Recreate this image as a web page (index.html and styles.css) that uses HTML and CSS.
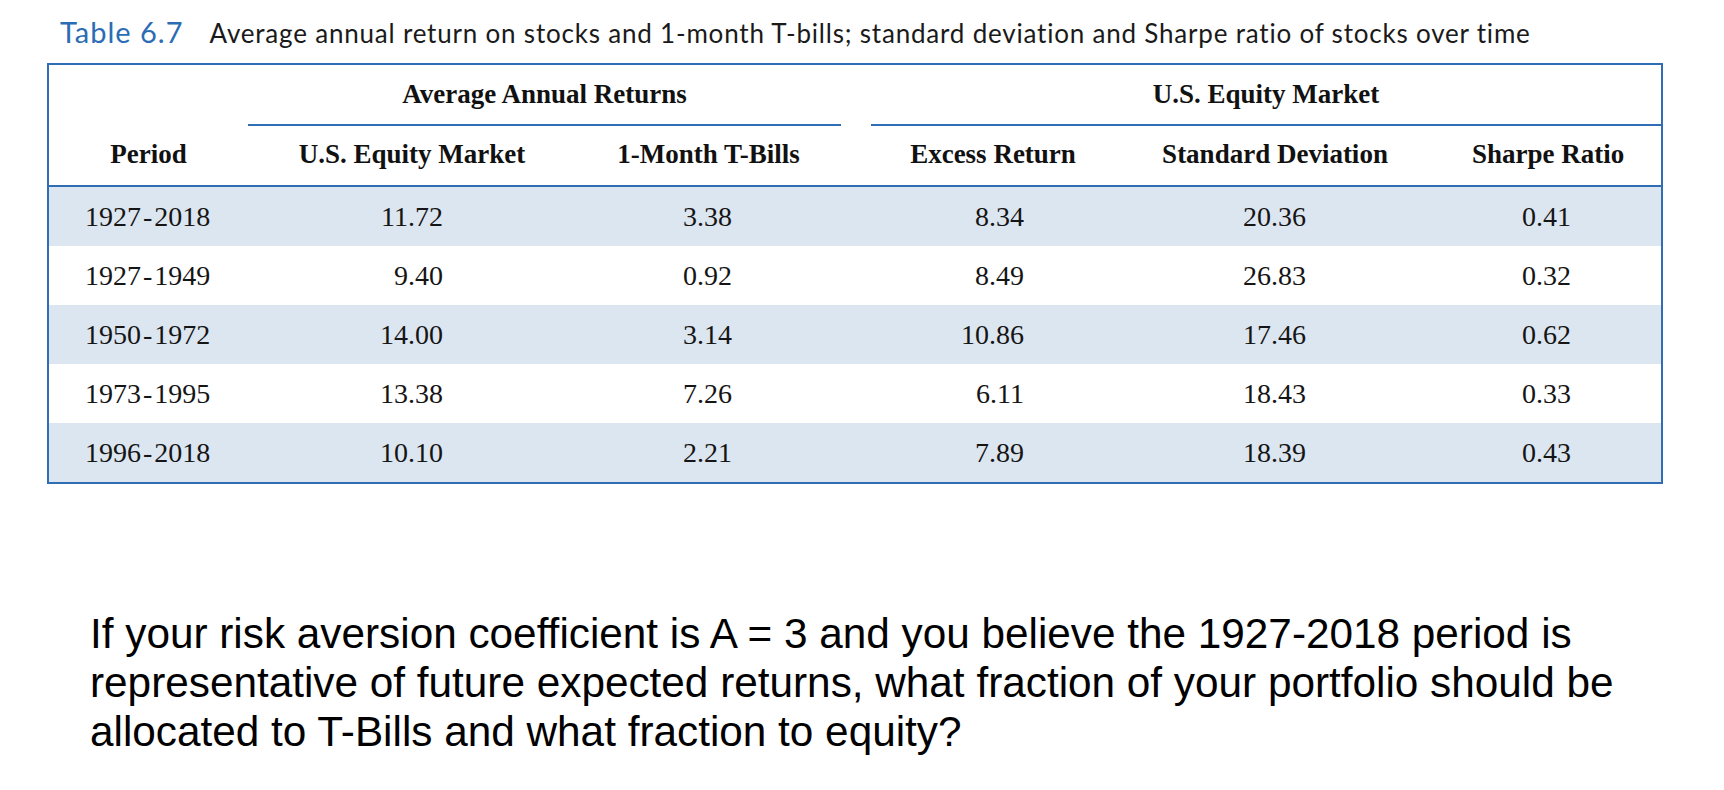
FILE: index.html
```html
<!DOCTYPE html>
<html lang="en">
<head>
<meta charset="utf-8">
<title>Table 6.7</title>
<link rel="stylesheet" href="styles.css">
</head>
<body>
<div class="page">
  <p class="caption"><span class="label">Table 6.7</span><span class="caption-text">Average annual return on stocks and 1-month T-bills; standard deviation and Sharpe ratio of stocks over time</span></p>
  <table class="returns">
    <colgroup>
      <col class="c-period">
      <col class="c-equity">
      <col class="c-tbills">
      <col class="c-gap">
      <col class="c-excess">
      <col class="c-sd">
      <col class="c-sharpe">
    </colgroup>
    <thead>
      <tr class="group-row">
        <th></th>
        <th colspan="2" class="group">Average Annual Returns</th>
        <th></th>
        <th colspan="3" class="group">U.S. Equity Market</th>
      </tr>
      <tr class="col-row">
        <th>Period</th>
        <th>U.S. Equity Market</th>
        <th>1-Month T-Bills</th>
        <th></th>
        <th>Excess Return</th>
        <th>Standard Deviation</th>
        <th>Sharpe Ratio</th>
      </tr>
    </thead>
    <tbody>
      <tr class="band">
        <td class="period">1927<span class="dash">-</span>2018</td>
        <td class="n2">11.72</td><td class="n3">3.38</td><td></td>
        <td class="n4">8.34</td><td class="n5">20.36</td><td class="n6">0.41</td>
      </tr>
      <tr>
        <td class="period">1927<span class="dash">-</span>1949</td>
        <td class="n2">9.40</td><td class="n3">0.92</td><td></td>
        <td class="n4">8.49</td><td class="n5">26.83</td><td class="n6">0.32</td>
      </tr>
      <tr class="band">
        <td class="period">1950<span class="dash">-</span>1972</td>
        <td class="n2">14.00</td><td class="n3">3.14</td><td></td>
        <td class="n4">10.86</td><td class="n5">17.46</td><td class="n6">0.62</td>
      </tr>
      <tr>
        <td class="period">1973<span class="dash">-</span>1995</td>
        <td class="n2">13.38</td><td class="n3">7.26</td><td></td>
        <td class="n4">6.11</td><td class="n5">18.43</td><td class="n6">0.33</td>
      </tr>
      <tr class="band">
        <td class="period">1996<span class="dash">-</span>2018</td>
        <td class="n2">10.10</td><td class="n3">2.21</td><td></td>
        <td class="n4">7.89</td><td class="n5">18.39</td><td class="n6">0.43</td>
      </tr>
    </tbody>
  </table>
  <p class="question">If your risk aversion coefficient is A = 3 and you believe the 1927-2018 period is representative of future expected returns, what fraction of your portfolio should be allocated to T-Bills and what fraction to equity?</p>
</div>
</body>
</html>
```

FILE: styles.css
```css
html, body {
  margin: 0;
  padding: 0;
  background: #ffffff;
}

.page {
  padding: 0 0 0 47px;
}

.caption {
  margin: 0;
  padding: 15px 0 0 13px;
  height: 48px;
  font-family: Lato, "Open Sans", sans-serif;
  font-size: 26px;
  letter-spacing: 0.8px;
  line-height: 34px;
  color: #1a1a1a;
  white-space: nowrap;
}

.caption .label {
  color: #2b6cb4;
  font-size: 29px;
  letter-spacing: 1px;
  margin-right: 26px;
}

.returns {
  border-collapse: separate;
  border-spacing: 0;
  border: 2px solid #2f6db5;
  width: 1616px;
  table-layout: fixed;
  font-family: "Liberation Serif", "Times New Roman", serif;
  color: #151515;
}

.c-period { width: 199px; }
.c-equity { width: 328px; }
.c-tbills { width: 265px; }
.c-gap { width: 30px; }
.c-excess { width: 244px; }
.c-sd { width: 320px; }
.c-sharpe { width: 226px; }

.returns th {
  font-weight: bold;
  font-size: 27px;
  text-align: center;
  padding: 0;
  color: #111111;
  vertical-align: middle;
}

.group-row {
  height: 61px;
}

.group-row th {
  border-bottom: 2px solid transparent;
}

.group-row th.group {
  border-bottom-color: #2f6db5;
}

.col-row {
  height: 61px;
}

.col-row th {
  border-bottom: 2px solid #2f6db5;
  padding-bottom: 3px;
}

.returns td {
  font-size: 28px;
  padding: 0;
  height: 59px;
  text-align: right;
  vertical-align: middle;
}

.returns tbody tr {
  height: 59px;
}

.returns tr.band td {
  background: #dce6f0;
}

.returns td.period {
  text-align: left;
  padding-left: 36px;
}

.dash {
  margin: 0 2px;
}

.returns td.n2 { padding-right: 133px; }
.returns td.n3 { padding-right: 109px; }
.returns td.n4 { padding-right: 91px; }
.returns td.n5 { padding-right: 129px; }
.returns td.n6 { padding-right: 90px; }

.question {
  margin: 125px 0 0 43px;
  max-width: 1600px;
  font-family: "Liberation Sans", Arial, sans-serif;
  font-size: 42.3px;
  line-height: 49px;
  color: #000000;
}
```
